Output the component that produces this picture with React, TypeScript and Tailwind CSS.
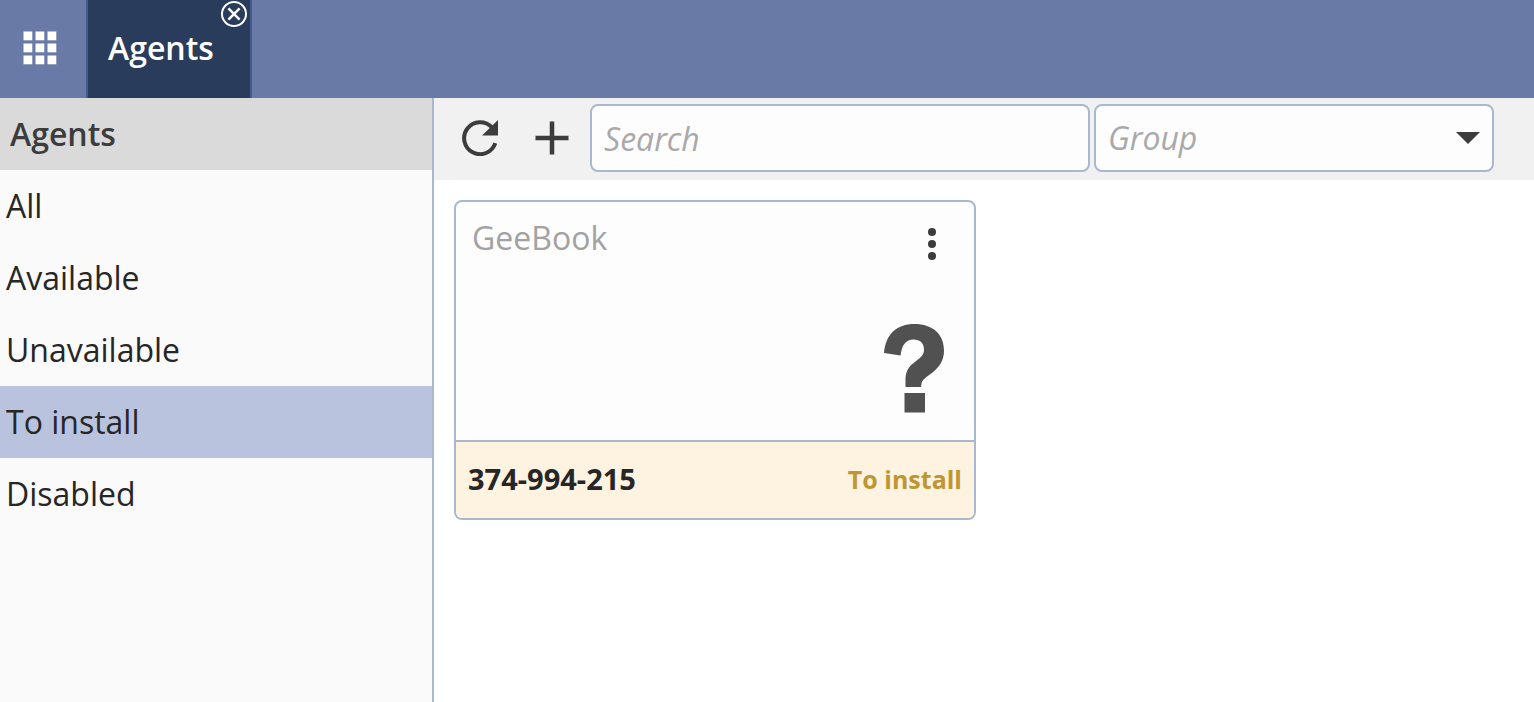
import { useState } from "react";

const filters = ["All", "Available", "Unavailable", "To install", "Disabled"];

const GridIcon = () => (
  <svg viewBox="0 0 34 34" className="w-[34px] h-[34px]" fill="currentColor" aria-hidden="true">
    {[0.5, 12.5, 24.5].map((y) =>
      [0.5, 12.5, 24.5].map((x) => <rect key={`${x}-${y}`} x={x} y={y} width="8.8" height="8.8" />)
    )}
  </svg>
);

const CloseIcon = () => (
  <svg viewBox="0 0 26 26" className="w-[26px] h-[26px]" fill="none" stroke="currentColor" aria-hidden="true">
    <circle cx="13" cy="13" r="12" strokeWidth="2" />
    <path d="M7.4 7.4l11.2 11.2M18.6 7.4L7.4 18.6" strokeWidth="2.5" />
  </svg>
);

const RefreshIcon = () => (
  <svg viewBox="0 0 36 36" className="w-9 h-9" aria-hidden="true">
    <path d="M33.3 23.2A16 16 0 1 1 29.8 7.2" fill="none" stroke="currentColor" strokeWidth="4" />
    <path d="M36 0v15.5H20z" fill="currentColor" />
  </svg>
);

const PlusIcon = () => (
  <svg viewBox="0 0 34 34" className="w-[34px] h-[34px]" fill="none" stroke="currentColor" aria-hidden="true">
    <path d="M17 .5v33M.5 17h33" strokeWidth="4.5" />
  </svg>
);

const DotsIcon = () => (
  <svg viewBox="0 0 8 32" className="w-2 h-8" fill="currentColor" aria-hidden="true">
    <circle cx="4" cy="4" r="4" />
    <circle cx="4" cy="16" r="4" />
    <circle cx="4" cy="28" r="4" />
  </svg>
);

const UnknownSystemIcon = () => (
  <svg viewBox="0 0 60 89" className="w-[60px] h-[89px] text-[#515151]" fill="currentColor" role="img" aria-label="Unknown system">
    <path d="M0 29C1.5 10.5 12.5 0 30.5 0C49 0 60 10.5 60 26.5C60 36 56 42.5 48.5 48.5C42 53.5 38.5 55.5 37.5 59.5L37 63H21.5V54.5C22 46 25.5 42 31.5 37.5C38 32.5 40 30.5 40 25.5C40 19 36 15.5 29.5 15.5C22 15.5 18 20.5 16.5 31.5Z" />
    <rect x="20.5" y="69" width="20.5" height="19.5" />
  </svg>
);

const Header = () => (
  <header className="flex h-[98px] shrink-0 bg-[#6a7aa6] text-white">
    <button type="button" aria-label="Applications" className="flex w-[86px] items-center justify-center pb-0.5 pr-1.5">
      <GridIcon />
    </button>
    <div className="relative flex border-x-2 border-[#435b91] bg-[#2a3c5b]">
      <button type="button" className="pb-0.5 pl-5 pr-9 text-[32px] font-semibold">
        Agents
      </button>
      <button type="button" aria-label="Close Agents" className="absolute right-[3px] top-px">
        <CloseIcon />
      </button>
    </div>
  </header>
);

const Toolbar = () => (
  <div className="flex h-[82px] items-center gap-0.5 bg-[#f1f1f1] pb-0.5 pl-2.5 pr-10">
    <div className="flex h-full shrink-0">
      <button type="button" aria-label="Refresh" className="flex w-[72px] items-center justify-center">
        <RefreshIcon />
      </button>
      <button type="button" aria-label="Add agent" className="flex w-[72px] items-center justify-center">
        <PlusIcon />
      </button>
    </div>
    <div className="flex min-w-0 flex-1 gap-1">
      <div className="min-w-0 flex-5">
        <input
          type="text"
          aria-label="Search"
          placeholder="Search"
          className="h-[68px] w-full rounded-lg border-2 border-[#a9b8cf] bg-[#fdfdfd] px-3 placeholder:italic placeholder:text-[#a9a9a9]"
        />
      </div>
      <div className="relative min-w-0 flex-4">
        <select
          aria-label="Group"
          className="h-[68px] w-full appearance-none rounded-lg border-2 border-[#a9b8cf] bg-[#fdfdfd] px-3 italic text-[#a9a9a9]"
        >
          <option>Group</option>
        </select>
        <svg viewBox="0 0 24 12" className="pointer-events-none absolute right-3.5 top-7 h-3 w-6" fill="currentColor" aria-hidden="true">
          <path d="M0 0h24L12 12z" />
        </svg>
      </div>
    </div>
  </div>
);

const AgentCard = ({ name, id, status }: { name: string; id: string; status: string }) => (
  <article className="flex w-[522px] flex-col overflow-hidden rounded-lg border-2 border-[#a9b8cf] bg-[#fdfdfd]">
    <div className="flex h-[238px] justify-between pl-4 pr-[30px]">
      <h2 className="pt-3 text-[#a2a2a2]">{name}</h2>
      <div className="flex flex-col items-end justify-between pb-[27px] pt-[26px]">
        <button type="button" aria-label="Agent menu" className="mr-2">
          <DotsIcon />
        </button>
        <UnknownSystemIcon />
      </div>
    </div>
    <div className="flex h-[78px] items-center justify-between border-t-2 border-[#a9b8cf] bg-[#fdf3e0] px-3 pb-0.5 font-bold">
      <span className="text-[29px] text-[#262626]">{id}</span>
      <span className="text-[25px] text-[#bf9634]">{status}</span>
    </div>
  </article>
);

const App = () => {
  const [selected, setSelected] = useState("To install");

  return (
    <div className="flex min-h-screen flex-col bg-white font-['Open_Sans',sans-serif] text-[32px] leading-12 text-[#3c3c3c]">
      <Header />
      <div className="flex flex-1">
        <nav className="w-[434px] shrink-0 border-r-2 border-[#a9b8cf] bg-[#fafafa] text-[#262626]">
          <h1 className="flex h-[72px] items-center bg-[#dadada] px-2.5 font-semibold text-[#3c3c3c]">Agents</h1>
          <ul>
            {filters.map((filter) => (
              <li key={filter}>
                <button
                  type="button"
                  onClick={() => setSelected(filter)}
                  className={`flex h-[72px] w-full items-center px-1.5 ${selected === filter ? "bg-[#b9c3dd]" : ""}`}
                >
                  {filter}
                </button>
              </li>
            ))}
          </ul>
        </nav>
        <main className="min-w-0 flex-1">
          <Toolbar />
          <div className="flex flex-wrap gap-5 p-5">
            <AgentCard name="GeeBook" id="374-994-215" status="To install" />
          </div>
        </main>
      </div>
    </div>
  );
};

export default App;
